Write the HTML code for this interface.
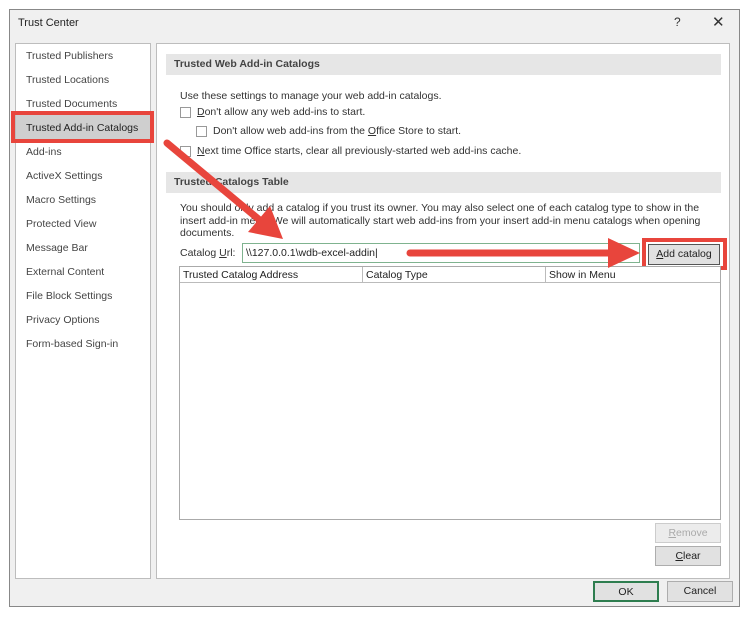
<!DOCTYPE html>
<html><head><meta charset="utf-8"><style>
*{margin:0;padding:0;box-sizing:border-box}
body{width:752px;height:618px;background:#fff;font-family:"Liberation Sans",sans-serif;font-size:10.5px;color:#333;position:relative;overflow:hidden}
.a{position:absolute}
.dlg{left:9px;top:9px;width:731px;height:598px;border:1px solid #888;background:#f0f0f0}
.panel{background:#fff;border:1px solid #bdbdbd}
.nav{color:#444;font-size:10.5px}
.hdr{background:#e6e6e6;font-weight:bold;color:#444;padding:4px 8px;font-size:10.5px}
.cb{width:11px;height:11px;border:1px solid #999;background:#fff}
.btn{background:#e1e1e1;border:1px solid #adadad;text-align:center;line-height:19px;font-size:10.5px;color:#222}
u{text-decoration:underline}
</style></head><body>
<div class="a dlg"></div>
<div class="a" style="left:18px;top:17px;font-size:11px;color:#222">Trust Center</div>
<div class="a" style="left:674px;top:15px;font-size:12px;color:#333">?</div>
<div class="a" style="left:712px;top:13px;font-size:15px;color:#333">✕</div>

<div class="a panel" style="left:15px;top:43px;width:136px;height:536px"></div>
<div class="a" style="left:16px;top:115px;width:134px;height:24px;background:#cfcfcf"></div>
<div class="a" style="left:11px;top:111px;width:143px;height:32px;border:4px solid #e8453c"></div>
<div class="a nav" style="left:26px;top:50px">Trusted Publishers</div>
<div class="a nav" style="left:26px;top:74px">Trusted Locations</div>
<div class="a nav" style="left:26px;top:98px">Trusted Documents</div>
<div class="a nav" style="left:26px;top:122px;color:#222">Trusted Add-in Catalogs</div>
<div class="a nav" style="left:26px;top:146px">Add-ins</div>
<div class="a nav" style="left:26px;top:170px">ActiveX Settings</div>
<div class="a nav" style="left:26px;top:194px">Macro Settings</div>
<div class="a nav" style="left:26px;top:218px">Protected View</div>
<div class="a nav" style="left:26px;top:242px">Message Bar</div>
<div class="a nav" style="left:26px;top:266px">External Content</div>
<div class="a nav" style="left:26px;top:290px">File Block Settings</div>
<div class="a nav" style="left:26px;top:314px">Privacy Options</div>
<div class="a nav" style="left:26px;top:338px">Form-based Sign-in</div>

<div class="a panel" style="left:156px;top:43px;width:574px;height:536px"></div>
<div class="a hdr" style="left:166px;top:54px;width:555px;height:21px">Trusted Web Add-in Catalogs</div>
<div class="a" style="left:180px;top:90px">Use these settings to manage your web add-in catalogs.</div>
<div class="a cb" style="left:180px;top:107px"></div>
<div class="a" style="left:197px;top:106px"><u>D</u>on't allow any web add-ins to start.</div>
<div class="a cb" style="left:196px;top:126px"></div>
<div class="a" style="left:213px;top:125px">Don't allow web add-ins from the <u>O</u>ffice Store to start.</div>
<div class="a cb" style="left:180px;top:146px"></div>
<div class="a" style="left:197px;top:145px"><u>N</u>ext time Office starts, clear all previously-started web add-ins cache.</div>
<div class="a hdr" style="left:166px;top:172px;width:555px;height:21px">Trusted Catalogs Table</div>
<div class="a" style="left:180px;top:202px;width:540px;line-height:12.5px">You should only add a catalog if you trust its owner. You may also select one of each catalog type to show in the insert add-in menu. We will automatically start web add-ins from your insert add-in menu catalogs when opening documents.</div>
<div class="a" style="left:180px;top:247px">Catalog <u>U</u>rl:</div>
<div class="a" style="left:242px;top:243px;width:398px;height:20px;border:1px solid #7fb38f;background:#fff;padding:3px 3px;color:#222">\\127.0.0.1\wdb-excel-addin|</div>
<div class="a" style="left:642px;top:238px;width:85px;height:32px;border:4px solid #e8453c"></div>
<div class="a btn" style="left:648px;top:244px;width:72px;height:21px;border-color:#555"><u>A</u>dd catalog</div>

<div class="a" style="left:179px;top:266px;width:542px;height:254px;border:1px solid #aaa;background:#fff"></div>
<div class="a" style="left:180px;top:267px;width:540px;height:16px;border-bottom:1px solid #bbb"></div>
<div class="a" style="left:183px;top:269px;color:#222">Trusted Catalog Address</div>
<div class="a" style="left:362px;top:267px;width:1px;height:16px;background:#bbb"></div>
<div class="a" style="left:366px;top:269px;color:#222">Catalog Type</div>
<div class="a" style="left:545px;top:267px;width:1px;height:16px;background:#bbb"></div>
<div class="a" style="left:549px;top:269px;color:#222">Show in Menu</div>

<div class="a btn" style="left:655px;top:523px;width:66px;height:20px;color:#aaa;border-color:#ccc;background:#ececec"><u>R</u>emove</div>
<div class="a btn" style="left:655px;top:546px;width:66px;height:20px"><u>C</u>lear</div>
<div class="a btn" style="left:593px;top:581px;width:66px;height:21px;border:2px solid #2e7d4f">OK</div>
<div class="a btn" style="left:667px;top:581px;width:66px;height:21px">Cancel</div>

<svg class="a" style="left:0;top:0" width="752" height="618">
<line x1="167" y1="143" x2="262" y2="222" stroke="#e8453c" stroke-width="7" stroke-linecap="round"/>
<polygon points="283,239 248,232 270,206" fill="#e8453c"/>
<line x1="410" y1="253" x2="612" y2="253" stroke="#e8453c" stroke-width="7" stroke-linecap="round"/>
<polygon points="640,253 608,238 608,268" fill="#e8453c"/>
</svg>
</body></html>
